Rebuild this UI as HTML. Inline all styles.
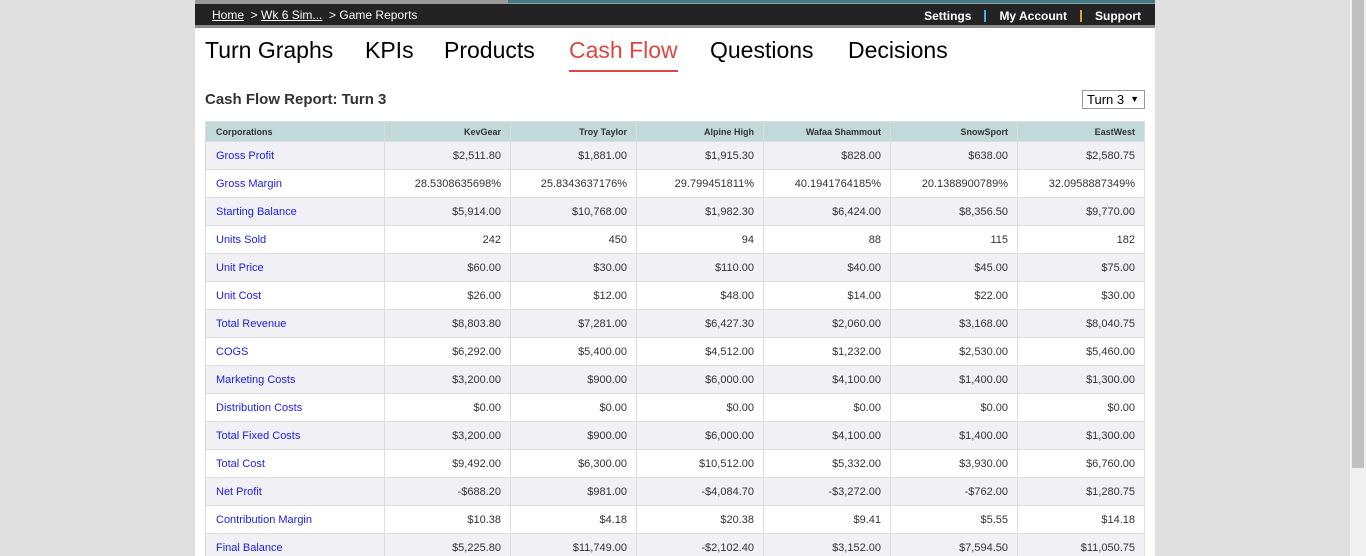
<!DOCTYPE html>
<html><head><meta charset="utf-8"><style>
*{margin:0;padding:0;box-sizing:border-box}
body{width:1366px;height:556px;overflow:hidden;background:#e0e0e0;font-family:"Liberation Sans",sans-serif;position:relative}
.sb{position:absolute;left:1350px;top:0;width:16px;height:556px;background:#f0f0f0}
.sb i{position:absolute;left:2px;top:0;width:12px;height:468px;background:#c0c0c0}
.wrap{position:absolute;left:195px;top:0;width:960px;height:556px;background:#fff;overflow:hidden}
.top{position:absolute;left:0;top:0;width:960px;height:4px;background:#9a9a9a}
.teal{position:absolute;left:313px;top:0;width:647px;height:3px;background:#3f7c86}
.bar{position:absolute;left:0;top:4px;width:960px;height:21px;background:#232323;color:#fff;font-size:12px}
.line{position:absolute;left:0;top:25px;width:960px;height:3px;background:#8c8c8c}
.bar a{color:#fff;text-decoration:underline}
.bc{position:absolute;left:17px;top:4px}
.rt{position:absolute;right:14px;top:5px;font-weight:bold;font-size:12px}
.rt .s{display:inline-block;width:2px;height:12px;vertical-align:-2px;margin:0 13px}
.tabs{position:absolute;top:37px;left:10px;font-size:23px;color:#000;white-space:nowrap}
.tabs span{position:absolute;top:0}
.act{color:#dc4840;border-bottom:2px solid #dc4840;height:35px}
h2{position:absolute;left:10px;top:91px;font-size:15px;font-weight:bold;color:#333}
.sel{position:absolute;left:887px;top:90px;width:63px;height:19px;border:1px solid #999;font-size:13px;padding-left:4px;line-height:17px}
.sel b{position:absolute;right:5px;top:0;font-size:9px}
table{position:absolute;left:10px;top:121px;width:939px;border-collapse:collapse;font-size:11px;color:#333;table-layout:fixed}
td{border:1px solid #dcdcdc;height:28px;text-align:right;padding-right:9px;white-space:nowrap}
td:first-child{text-align:left;padding-left:10px;color:#1a1aee}
th{background:#c1d9d9;height:20px;font-size:9px;text-align:right;padding-right:9px;border:1px solid #dcdcdc;color:#333}
th:first-child{text-align:left;padding-left:10px}
tr:nth-child(even) td{background:#f1f1f5}
</style></head><body>
<div class="sb"><i></i></div>
<div class="wrap">
<div class="top"></div><div class="teal"></div>
<div class="bar"><div class="bc"><a>Home</a>&nbsp;&nbsp;&gt;&nbsp;<a>Wk 6 Sim...</a>&nbsp;&nbsp;&gt;&nbsp;Game Reports</div>
<div class="rt">Settings<span class="s" style="background:#4aa8e0"></span>My Account<span class="s" style="background:#e0a040"></span>Support</div></div>
<div class="line"></div>
<div class="tabs"><span style="left:0">Turn Graphs</span><span style="left:160px">KPIs</span><span style="left:239px">Products</span><span class="act" style="left:364px">Cash Flow</span><span style="left:505px">Questions</span><span style="left:643px">Decisions</span></div>
<h2>Cash Flow Report: Turn 3</h2>
<div class="sel">Turn 3<b>▼</b></div>
<table>
<colgroup><col style="width:179px"><col style="width:126px"><col style="width:126px"><col style="width:127px"><col style="width:127px"><col style="width:127px"><col style="width:127px"></colgroup>
<tr><th>Corporations</th><th>KevGear</th><th>Troy Taylor</th><th>Alpine High</th><th>Wafaa Shammout</th><th>SnowSport</th><th>EastWest</th></tr>
<tr><td>Gross Profit</td><td>$2,511.80</td><td>$1,881.00</td><td>$1,915.30</td><td>$828.00</td><td>$638.00</td><td>$2,580.75</td></tr>
<tr><td>Gross Margin</td><td>28.5308635698%</td><td>25.8343637176%</td><td>29.799451811%</td><td>40.1941764185%</td><td>20.1388900789%</td><td>32.0958887349%</td></tr>
<tr><td>Starting Balance</td><td>$5,914.00</td><td>$10,768.00</td><td>$1,982.30</td><td>$6,424.00</td><td>$8,356.50</td><td>$9,770.00</td></tr>
<tr><td>Units Sold</td><td>242</td><td>450</td><td>94</td><td>88</td><td>115</td><td>182</td></tr>
<tr><td>Unit Price</td><td>$60.00</td><td>$30.00</td><td>$110.00</td><td>$40.00</td><td>$45.00</td><td>$75.00</td></tr>
<tr><td>Unit Cost</td><td>$26.00</td><td>$12.00</td><td>$48.00</td><td>$14.00</td><td>$22.00</td><td>$30.00</td></tr>
<tr><td>Total Revenue</td><td>$8,803.80</td><td>$7,281.00</td><td>$6,427.30</td><td>$2,060.00</td><td>$3,168.00</td><td>$8,040.75</td></tr>
<tr><td>COGS</td><td>$6,292.00</td><td>$5,400.00</td><td>$4,512.00</td><td>$1,232.00</td><td>$2,530.00</td><td>$5,460.00</td></tr>
<tr><td>Marketing Costs</td><td>$3,200.00</td><td>$900.00</td><td>$6,000.00</td><td>$4,100.00</td><td>$1,400.00</td><td>$1,300.00</td></tr>
<tr><td>Distribution Costs</td><td>$0.00</td><td>$0.00</td><td>$0.00</td><td>$0.00</td><td>$0.00</td><td>$0.00</td></tr>
<tr><td>Total Fixed Costs</td><td>$3,200.00</td><td>$900.00</td><td>$6,000.00</td><td>$4,100.00</td><td>$1,400.00</td><td>$1,300.00</td></tr>
<tr><td>Total Cost</td><td>$9,492.00</td><td>$6,300.00</td><td>$10,512.00</td><td>$5,332.00</td><td>$3,930.00</td><td>$6,760.00</td></tr>
<tr><td>Net Profit</td><td>-$688.20</td><td>$981.00</td><td>-$4,084.70</td><td>-$3,272.00</td><td>-$762.00</td><td>$1,280.75</td></tr>
<tr><td>Contribution Margin</td><td>$10.38</td><td>$4.18</td><td>$20.38</td><td>$9.41</td><td>$5.55</td><td>$14.18</td></tr>
<tr><td>Final Balance</td><td>$5,225.80</td><td>$11,749.00</td><td>-$2,102.40</td><td>$3,152.00</td><td>$7,594.50</td><td>$11,050.75</td></tr>
</table>
</div>
</body></html>
